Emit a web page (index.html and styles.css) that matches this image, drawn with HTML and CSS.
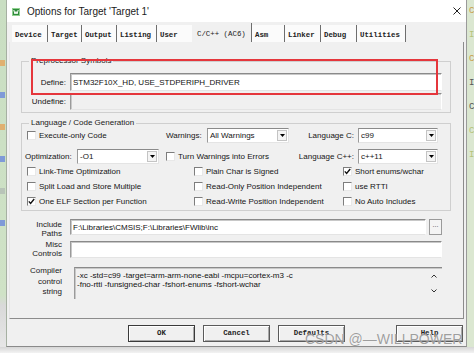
FILE: index.html
```html
<!DOCTYPE html>
<html>
<head>
<meta charset="utf-8">
<title>Options for Target</title>
<link rel="stylesheet" href="styles.css">
</head>
<body>
<div class="screen">
  <div class="row">
    <div class="edge edge-left">
      <span class="code c-orange"></span>
      <span class="code c-blue"></span>
      <span class="code c-orange"></span>
      <span class="code c-blue"></span>
      <span class="code c-grey"></span>
      <span class="code c-blue"></span>
    </div>
    <div class="dialog">
      <div class="titlebar">
        <svg class="app-icon" width="8" height="8" viewBox="0 0 8 8"><rect x="0" y="0" width="8" height="8" fill="#2e8a3a"/><rect x="0.5" y="0.5" width="7" height="7" fill="none" stroke="#8fd08f" stroke-width="1"/><polyline points="1.8,2 3,6 4,3.5 5,6 6.2,2" fill="none" stroke="#fff" stroke-width="1"/></svg>
        <span class="title">Options for Target 'Target 1'</span>
        <svg class="close" width="8" height="8" viewBox="0 0 8 8"><path d="M0.5 0.5 L7.5 7.5 M7.5 0.5 L0.5 7.5" stroke="#222" stroke-width="1" fill="none"/></svg>
      </div>
      <div class="tabs">
        <span class="tab">Device</span>
        <span class="tab">Target</span>
        <span class="tab">Output</span>
        <span class="tab">Listing</span>
        <span class="tab tab-before">User</span>
        <span class="tab tab-active">C/C++ (AC6)</span>
        <span class="tab">Asm</span>
        <span class="tab">Linker</span>
        <span class="tab">Debug</span>
        <span class="tab">Utilities</span>
      </div>
      <div class="panel">
        <fieldset class="group group-pre">
          <legend>Preprocessor Symbols</legend>
          <div class="pre-grid">
            <span class="lbl-r">Define:</span>
            <div class="field field-define">STM32F10X_HD, USE_STDPERIPH_DRIVER</div>
            <span class="lbl-r">Undefine:</span>
            <div class="field field-disabled"></div>
          </div>
        </fieldset>
        <fieldset class="group group-lang">
          <legend>Language / Code Generation</legend>
          <div class="lrow lrow-1">
            <div class="chk w-exec"><span class="box"></span><span>Execute-only Code</span></div>
            <span class="lbl w-warn">Warnings:</span>
            <div class="select w-sel82"><span class="sel-text">All Warnings</span><span class="sel-btn"><svg width="5" height="3" viewBox="0 0 5 3"><polygon points="0,0 5,0 2.5,3" fill="#000"/></svg></span></div>
            <span class="lbl-r w-lang">Language C:</span>
            <div class="select w-sel80"><span class="sel-text">c99</span><span class="sel-btn"><svg width="5" height="3" viewBox="0 0 5 3"><polygon points="0,0 5,0 2.5,3" fill="#000"/></svg></span></div>
          </div>
          <div class="lrow lrow-2">
            <span class="lbl w-opt">Optimization:</span>
            <div class="select w-sel82"><span class="sel-text">-O1</span><span class="sel-btn"><svg width="5" height="3" viewBox="0 0 5 3"><polygon points="0,0 5,0 2.5,3" fill="#000"/></svg></span></div>
            <div class="chk w-turn"><span class="box"></span><span>Turn Warnings into Errors</span></div>
            <span class="lbl-r w-lang">Language C++:</span>
            <div class="select w-sel80"><span class="sel-text">c++11</span><span class="sel-btn"><svg width="5" height="3" viewBox="0 0 5 3"><polygon points="0,0 5,0 2.5,3" fill="#000"/></svg></span></div>
          </div>
          <div class="lrow lrow-c">
            <div class="chk col-a"><span class="box"></span><span>Link-Time Optimization</span></div>
            <div class="chk col-b"><span class="box"></span><span>Plain Char is Signed</span></div>
            <div class="chk col-c"><span class="box"><svg width="7" height="7" viewBox="0 0 7 7"><polyline points="0.8,3.4 2.6,5.4 6.2,1" fill="none" stroke="#111" stroke-width="1.4"/></svg></span><span>Short enums/wchar</span></div>
          </div>
          <div class="lrow lrow-c">
            <div class="chk col-a"><span class="box"></span><span>Split Load and Store Multiple</span></div>
            <div class="chk col-b"><span class="box"></span><span>Read-Only Position Independent</span></div>
            <div class="chk col-c"><span class="box"></span><span>use RTTI</span></div>
          </div>
          <div class="lrow lrow-c">
            <div class="chk col-a"><span class="box"><svg width="7" height="7" viewBox="0 0 7 7"><polyline points="0.8,3.4 2.6,5.4 6.2,1" fill="none" stroke="#111" stroke-width="1.4"/></svg></span><span>One ELF Section per Function</span></div>
            <div class="chk col-b"><span class="box"></span><span>Read-Write Position Independent</span></div>
            <div class="chk col-c"><span class="box"></span><span>No Auto Includes</span></div>
          </div>
        </fieldset>
        <div class="misc-grid">
          <span class="lbl-multi lbl-inc">Include<br>Paths</span>
          <div class="inc-field">
            <div class="field field-inc">F:\Libraries\CMSIS;F:\Libraries\FWlib\inc</div>
            <span class="dots">...</span>
          </div>
          <span class="lbl-multi lbl-misc">Misc<br>Controls</span>
          <div class="field field-misc"></div>
          <span class="lbl-multi lbl-comp">Compiler<br>control<br>string</span>
          <div class="textarea">
            <div class="ta-text">-xc -std=c99 -target=arm-arm-none-eabi -mcpu=cortex-m3 -c<br>-fno-rtti -funsigned-char -fshort-enums -fshort-wchar</div>
            <div class="ta-scroll">
              <svg width="6" height="4" viewBox="0 0 6 4"><polyline points="0.5,3.5 3,1 5.5,3.5" fill="none" stroke="#333" stroke-width="1"/></svg>
              <svg width="6" height="4" viewBox="0 0 6 4"><polyline points="0.5,0.5 3,3 5.5,0.5" fill="none" stroke="#333" stroke-width="1"/></svg>
            </div>
          </div>
        </div>
      </div>
      <div class="buttons">
        <span class="btn btn-default">OK</span>
        <span class="btn">Cancel</span>
        <span class="btn">Defaults</span>
        <span class="btn btn-help">Help</span>
      </div>
    </div>
    <div class="edge edge-right">
      <span class="rcode r-orange">C</span>
      <span class="rcode r-olive">I</span>
      <span class="rcode r-orange">C</span>
      <span class="rcode r-grey">I</span>
      <span class="rcode r-grey">C</span>
      <span class="rcode r-olive">C</span>
      <span class="rcode r-olive">I</span>
    </div>
  </div>
  <div class="floor"></div>
</div>
<div class="highlight"></div>
<div class="watermark">CSDN @—WILLPOWER</div>
</body>
</html>
```

FILE: styles.css
```css
* { box-sizing: border-box; }
html, body { margin: 0; padding: 0; }
body {
  width: 474px;
  height: 353px;
  overflow: hidden;
  position: relative;
  font-family: "Liberation Sans", Arial, sans-serif;
  font-size: 8px;
  color: #151515;
  background: #ececec;
}
.screen { display: flex; flex-direction: column; height: 353px; }
.row { display: flex; height: 347px; }
.floor { height: 6px; background: linear-gradient(#d6d6d6, #f3f3f3); }

/* background editor strips */
.edge-left {
  width: 6px;
  background: linear-gradient(#c9dec2 0, #cfe2c6 85%, #d9d9d9 88%, #e6e6e6 100%);
  display: flex;
  flex-direction: column;
  gap: 26px;
  padding-top: 60px;
}
.code { display: block; width: 5px; height: 6px; }
.c-orange { background: #e0b070; }
.c-blue { background: #7f9ad8; }
.c-grey { background: #b8c4b8; }
.edge-right {
  width: 7px;
  background: #dbe7d1;
  display: flex;
  flex-direction: column;
  gap: 14px;
  padding: 6px 0 0 2px;
  font-family: "Liberation Mono", monospace;
  font-size: 9px;
  line-height: 10px;
  overflow: hidden;
}
.rcode { display: block; }
.r-orange { color: #c9a04a; }
.r-olive { color: #b5c37a; }
.r-grey { color: #555; }

/* dialog */
.dialog {
  width: 461px;
  background: #f0f0f0;
  display: flex;
  flex-direction: column;
  border-left: 1px solid #a6b0a2;
  border-right: 1px solid #9a9a9a;
  border-bottom: 1px solid #8a8a8a;
}
.titlebar {
  height: 22px;
  background: #fff;
  display: flex;
  align-items: center;
  padding: 0 5px 0 5px;
}
.app-icon { display: block; margin-top: 1px; }
.title {
  margin-left: 7px;
  font-size: 10px;
  color: #1b1b1b;
  font-family: "Liberation Sans", Arial, sans-serif;
}
.close { margin-left: auto; display: block; }

/* tabs */
.tabs {
  height: 20px;
  display: grid;
  grid-template-columns: 36px 34px 35px 40px 35px 60px 33px 36px 36px 49px;
  align-items: end;
  padding-left: 5px;
}
.tab {
  height: 17px;
  background: #fbfbfb;
  font-family: "Liberation Mono", "DejaVu Sans Mono", monospace;
  font-weight: bold;
  font-size: 7.4px;
  line-height: 14px;
  padding: 3px 0 0 3px;
  color: #222;
  border-right: 1px solid #6e6e6e;
  white-space: nowrap;
}
.tab-before { border-right: none; }
.tab-active {
  background: #f0f0f0;
  font-weight: normal;
  height: 19px;
  padding-top: 4px;
  padding-left: 5px;
}

/* panel */
.panel {
  margin-left: 2px;
  width: 455px;
  height: 277px;
  border-left: 1px solid #e6e6e6;
  border-right: 1px solid #8c8c8c;
  border-bottom: 1px solid #8c8c8c;
  padding-left: 11px;
  display: flex;
  flex-direction: column;
}
.group {
  margin: 0;
  padding: 0;
  min-width: 0;
  width: 430px;
  border: 1px solid #cfcfcf;
}
.group legend {
  padding: 0 2px;
  margin-left: 7px;
  line-height: 10px;
  font-size: 8px;
  color: #1a1a1a;
}
.group-pre { margin-top: 14px; padding: 7px 8px 2px 0; }
.group-lang { margin-top: 5px; padding: 0 0 1px 0; }

.pre-grid {
  display: grid;
  grid-template-columns: 44px 372px;
  grid-template-rows: 18px 17px;
  column-gap: 4px;
  row-gap: 2px;
}
.lbl-r { text-align: right; align-self: center; white-space: nowrap; }
.lbl { white-space: nowrap; align-self: center; }

.field {
  background: #fff;
  border-top: 1px solid #8a8a8a;
  border-left: 1px solid #9a9a9a;
  border-bottom: 1px solid #e4e4e4;
  border-right: 1px solid #fff;
  box-shadow: inset 1px 1px 0 #c8c8c8;
  padding-left: 2px;
  display: flex;
  align-items: center;
  white-space: nowrap;
  color: #111;
}
.field-define { font-size: 8px; }
.field-disabled { background: #f0f0f0; }

/* language rows */
.lrow { display: flex; align-items: center; height: 15px; }
.lrow-2 { margin-top: 6px; }
.lrow-1 { margin-top: 0; }
.chk { display: flex; align-items: center; white-space: nowrap; }
.box {
  width: 9px;
  height: 9px;
  margin-right: 3px;
  background: #fff;
  border-top: 1px solid #7d7d7d;
  border-left: 1px solid #7d7d7d;
  border-right: 1px solid #e8e8e8;
  border-bottom: 1px solid #e8e8e8;
  display: flex;
  align-items: center;
  justify-content: center;
  flex: none;
}
.box svg { display: block; }
.w-exec { margin-left: 5px; width: 139px; }
.w-warn { width: 41px; }
.w-sel82 { width: 82px; }
.w-sel80 { width: 80px; }
.w-lang { width: 69px; padding-right: 4px; }
.w-opt { margin-left: 3px; width: 52px; }
.w-turn { margin-left: 7px; width: 123px; }
.col-a { margin-left: 5px; width: 167px; }
.col-b { width: 149px; }
.col-c { width: 90px; }

.select {
  height: 15px;
  background: #fff;
  border-top: 1px solid #8a8a8a;
  border-left: 1px solid #9a9a9a;
  border-bottom: 1px solid #e4e4e4;
  border-right: 1px solid #e4e4e4;
  display: flex;
  align-items: center;
}
.sel-text { flex: 1; padding-left: 2px; white-space: nowrap; }
.sel-btn {
  width: 10px;
  height: 11px;
  margin-right: 1px;
  background: #f4f4f4;
  border: 1px solid #c4c4c4;
  display: flex;
  align-items: center;
  justify-content: center;
}
.sel-btn svg { display: block; }

/* bottom fields */
.misc-grid {
  margin-top: 8px;
  display: grid;
  grid-template-columns: 45px 372px;
  grid-template-rows: 19px 19px 38px;
  column-gap: 4px;
  row-gap: 2px;
}
.lbl-multi {
  text-align: right;
  padding-right: 4px;
  line-height: 9px;
  color: #1a1a1a;
}
.lbl-inc { margin-top: 1px; }
.lbl-comp { margin-top: 5px; line-height: 10.5px; }
.inc-field { display: flex; align-items: flex-start; gap: 3px; }
.field-inc { width: 357px; height: 16px; }
.dots {
  width: 13px;
  height: 16px;
  background: #f4f4f4;
  border: 1px solid #9a9a9a;
  font-size: 7px;
  line-height: 10px;
  text-align: center;
  color: #444;
}
.field-misc { height: 17px; margin-top: 1px; }
.textarea {
  margin-top: 6px;
  margin-left: 4px;
  height: 32px;
  border-top: 1px solid #8a8a8a;
  border-left: 1px solid #9a9a9a;
  box-shadow: inset 1px 1px 0 #c8c8c8;
  display: flex;
  background: #f0f0f0;
}
.ta-text {
  flex: 1;
  padding: 3px 0 0 2px;
  line-height: 9px;
  white-space: nowrap;
  color: #111;
}
.ta-scroll {
  width: 12px;
  display: flex;
  flex-direction: column;
  align-items: center;
  gap: 11px;
  padding-top: 6px;
  margin-right: 2px;
}
.ta-scroll svg { display: block; }

/* buttons */
.buttons {
  flex: 1;
  display: flex;
  align-items: flex-start;
  gap: 8px;
  padding: 6px 3px 0 121px;
}
.btn {
  width: 67px;
  height: 17px;
  background: #f0f0f0;
  border: 1px solid #5a5a5a;
  box-shadow: inset 1px 1px 0 #fff, inset -1px -1px 0 #a8a8a8;
  font-family: "Liberation Mono", "DejaVu Sans Mono", monospace;
  font-weight: bold;
  font-size: 7.4px;
  line-height: 15px;
  text-align: center;
  color: #222;
}
.btn-default { border-color: #3a3a3a; }
.btn-help { margin-left: auto; }

/* overlays */
.highlight {
  position: absolute;
  left: 31px;
  top: 59px;
  width: 407px;
  height: 36px;
  border: 2px solid #e5363c;
}
.watermark {
  position: absolute;
  left: 305px;
  top: 331px;
  font-family: "Liberation Sans", Arial, sans-serif;
  font-size: 14px;
  line-height: 16px;
  color: rgba(128, 128, 128, 0.75);
  text-shadow: 0 0 1px rgba(255,255,255,0.8);
  white-space: nowrap;
}
```
